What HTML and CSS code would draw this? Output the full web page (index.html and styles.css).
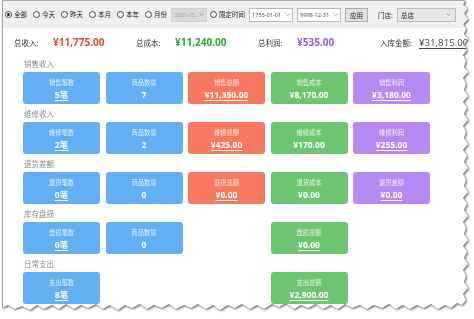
FILE: index.html
```html
<!DOCTYPE HTML>
<html lang="zh-cn">

<head>
    <meta charset="utf-8">
    <title>营业汇总</title>
    <link rel="stylesheet" href="styles.css">
</head>

<body>
    <div class="shot">
        <div class="window">
            <!-- 筛选条件 -->
            <div class="toolbar">
                <label class="radio on"><span class="dot"></span>全部</label>
                <label class="radio"><span class="dot"></span>今天</label>
                <label class="radio"><span class="dot"></span>昨天</label>
                <label class="radio"><span class="dot"></span>本月</label>
                <label class="radio"><span class="dot"></span>本年</label>
                <label class="radio last"><span class="dot"></span>月份</label>
                <div class="combo off">2021-05
                    <svg class="chev" width="5" height="3" viewBox="0 0 5 3"><polyline points="0.5,0.5 2.5,2.5 4.5,0.5" /></svg>
                </div>
                <label class="radio range"><span class="dot"></span>限定时间</label>
                <div class="combo date">1753-01-01
                    <svg class="chev" width="5" height="3" viewBox="0 0 5 3"><polyline points="0.5,0.5 2.5,2.5 4.5,0.5" /></svg>
                </div>
                <div class="combo date">9998-12-31
                    <svg class="chev" width="5" height="3" viewBox="0 0 5 3"><polyline points="0.5,0.5 2.5,2.5 4.5,0.5" /></svg>
                </div>
                <button class="btn">应用</button>
                <span class="store-label">门店:</span>
                <div class="combo store">总店
                    <svg class="chev" width="5" height="3" viewBox="0 0 5 3"><polyline points="0.5,0.5 2.5,2.5 4.5,0.5" /></svg>
                </div>
            </div>

            <!-- 汇总 -->
            <div class="summary">
                <div class="stat"><span class="stat-label">总收入:</span><span class="stat-value red">¥11,775.00</span></div>
                <div class="stat"><span class="stat-label">总成本:</span><span class="stat-value green">¥11,240.00</span></div>
                <div class="stat"><span class="stat-label">总利润:</span><span class="stat-value purple">¥535.00</span></div>
                <div class="stat"><span class="stat-label">入库金额:</span><span class="stat-value plain link">¥31,815.00</span></div>
            </div>

            <div class="sections">
                <div class="sec-title">销售收入</div>
                <div class="cards">
                    <div class="card blue"><div class="c-title">销售笔数</div><div class="c-value"><span class="link">5笔</span></div></div>
                    <div class="card blue"><div class="c-title">商品数量</div><div class="c-value">7</div></div>
                    <div class="card red"><div class="c-title">销售总额</div><div class="c-value"><span class="link">¥11,350.00</span></div></div>
                    <div class="card green"><div class="c-title">销售成本</div><div class="c-value">¥8,170.00</div></div>
                    <div class="card purple"><div class="c-title">销售利润</div><div class="c-value"><span class="link">¥3,180.00</span></div></div>
                </div>

                <div class="sec-title">维修收入</div>
                <div class="cards">
                    <div class="card blue"><div class="c-title">维修笔数</div><div class="c-value"><span class="link">2笔</span></div></div>
                    <div class="card blue"><div class="c-title">商品数量</div><div class="c-value">2</div></div>
                    <div class="card red"><div class="c-title">维修总额</div><div class="c-value"><span class="link">¥425.00</span></div></div>
                    <div class="card green"><div class="c-title">维修成本</div><div class="c-value">¥170.00</div></div>
                    <div class="card purple"><div class="c-title">维修利润</div><div class="c-value"><span class="link">¥255.00</span></div></div>
                </div>

                <div class="sec-title">退货差额</div>
                <div class="cards">
                    <div class="card blue"><div class="c-title">退货笔数</div><div class="c-value"><span class="link">0笔</span></div></div>
                    <div class="card blue"><div class="c-title">商品数量</div><div class="c-value">0</div></div>
                    <div class="card red"><div class="c-title">退货总额</div><div class="c-value"><span class="link">¥0.00</span></div></div>
                    <div class="card green"><div class="c-title">退货成本</div><div class="c-value">¥0.00</div></div>
                    <div class="card purple"><div class="c-title">退货差额</div><div class="c-value"><span class="link">¥0.00</span></div></div>
                </div>

                <div class="sec-title">库存盘损</div>
                <div class="cards">
                    <div class="card blue"><div class="c-title">盘损笔数</div><div class="c-value"><span class="link">0笔</span></div></div>
                    <div class="card blue"><div class="c-title">商品数量</div><div class="c-value">0</div></div>
                    <div class="card green at4"><div class="c-title">盘损总额</div><div class="c-value"><span class="link">¥0.00</span></div></div>
                </div>

                <div class="sec-title">日常支出</div>
                <div class="cards">
                    <div class="card blue"><div class="c-title">支出笔数</div><div class="c-value"><span class="link">8笔</span></div></div>
                    <div class="card green at4"><div class="c-title">支出总额</div><div class="c-value"><span class="link">¥2,900.00</span></div></div>
                </div>
            </div>
        </div>
    </div>
</body>

</html>
```

FILE: styles.css
```css
* {
    box-sizing: border-box;
}

body {
    margin: 0;
    background-color: #fff;
    font-family: "Noto Sans CJK SC", sans-serif;
    color: #333;
}

/* 截图外框: 撕边 + 阴影 */
.shot {
    width: 474px;
    height: 319px;
    filter: drop-shadow(1px 1px 1px rgba(0, 0, 0, 0.65));
}

.window {
    margin-left: 2px;
    width: 470px;
    height: 314px;
    background-color: #fff;
    border-top: 1px solid #a9a9a9;
    border-left: 1px solid #a0a0a0;
    overflow: hidden;
    clip-path: polygon(0 0, 463px 0, 461px 5px, 465px 9px, 462px 14px, 466px 19px, 461px 24px, 464px 29px, 462px 34px, 466px 39px, 462px 44px, 465px 50px, 461px 55px, 464px 61px, 462px 67px, 466px 72px, 461px 78px, 464px 84px, 462px 90px, 466px 96px, 461px 102px, 465px 108px, 462px 114px, 466px 120px, 461px 126px, 464px 132px, 462px 138px, 466px 144px, 461px 150px, 465px 156px, 462px 162px, 466px 168px, 461px 174px, 464px 180px, 462px 186px, 466px 192px, 461px 198px, 465px 204px, 462px 210px, 466px 216px, 461px 222px, 464px 228px, 462px 234px, 466px 240px, 461px 246px, 465px 252px, 462px 258px, 466px 264px, 461px 270px, 464px 276px, 462px 282px, 466px 288px, 461px 294px, 464px 300px, 460px 305px, 455px 303px, 449px 308px, 443px 305px, 436px 309px, 429px 304px, 422px 308px, 415px 305px, 408px 309px, 401px 305px, 394px 309px, 387px 304px, 380px 308px, 372px 305px, 365px 309px, 358px 305px, 350px 308px, 343px 304px, 336px 309px, 329px 305px, 321px 309px, 314px 304px, 306px 308px, 299px 305px, 292px 309px, 284px 303px, 277px 307px, 270px 304px, 262px 309px, 255px 305px, 248px 309px, 240px 304px, 233px 308px, 226px 305px, 218px 310px, 211px 305px, 204px 309px, 196px 304px, 189px 308px, 182px 305px, 174px 309px, 167px 304px, 160px 308px, 152px 305px, 145px 309px, 138px 304px, 130px 308px, 123px 305px, 116px 310px, 108px 305px, 101px 309px, 94px 304px, 86px 308px, 79px 305px, 72px 309px, 64px 304px, 57px 309px, 50px 305px, 42px 309px, 35px 305px, 28px 310px, 20px 306px, 13px 309px, 6px 305px, 0 308px);
}

/* 工具栏 */
.toolbar {
    height: 27px;
    display: flex;
    align-items: center;
    padding-left: 2px;
    background-color: #f0f0f0;
    font-size: 6.5px;
    color: #222;
    white-space: nowrap;
}

.radio {
    display: flex;
    align-items: center;
    gap: 2px;
    margin-right: 6px;
    line-height: 1;
}

.radio.last {
    margin-right: 4px;
}

.radio.range {
    margin-right: 4px;
}

.dot {
    width: 7px;
    height: 7px;
    border: 1px solid #444;
    border-radius: 50%;
    background-color: #fff;
    display: flex;
    align-items: center;
    justify-content: center;
}

.radio.on .dot::after {
    content: "";
    width: 3px;
    height: 3px;
    border-radius: 50%;
    background-color: #222;
}

.combo {
    height: 14px;
    display: flex;
    align-items: center;
    justify-content: space-between;
    padding: 0 2px;
    border: 1px solid #b8b8b8;
    background-color: #fff;
    font-family: "Open Sans", sans-serif;
    font-size: 5.6px;
    color: #444;
}

.chev polyline {
    fill: none;
    stroke: #8a8a8a;
    stroke-width: 0.8;
}

.combo.off {
    width: 36px;
    margin-right: 3px;
    background-color: #d9d9d9;
    border-color: #cfcfcf;
    color: #a0a0a0;
}

.combo.date {
    width: 44px;
    margin-right: 4px;
}

.combo.store {
    width: 59px;
    padding-left: 3px;
    padding-right: 4px;
    background-color: #e6e6e6;
    border-color: #bdbdbd;
    font-family: "Noto Sans CJK SC", sans-serif;
    font-size: 6.5px;
    color: #222;
}

.btn {
    width: 23px;
    height: 14px;
    padding: 0;
    margin-right: 10px;
    border: 1px solid #adadad;
    background-color: #e1e1e1;
    font-family: "Noto Sans CJK SC", sans-serif;
    font-size: 6.5px;
    color: #222;
}

.store-label {
    width: 19px;
}

/* 汇总 */
.summary {
    height: 28px;
    display: grid;
    grid-template-columns: repeat(4, 122px);
    align-items: center;
    padding-left: 11px;
}

.stat {
    display: flex;
    align-items: baseline;
    white-space: nowrap;
}

.stat-label {
    width: 39px;
    font-size: 7.5px;
    color: #333;
}

.stat-value {
    font-family: "Open Sans", sans-serif;
    font-weight: 700;
    font-size: 10px;
}

.stat-value.red {
    color: #ee4538;
}

.stat-value.green {
    color: #1fae2a;
}

.stat-value.purple {
    color: #9a5ae8;
}

.stat-value.plain {
    font-weight: 400;
    font-size: 9.7px;
    color: #444;
}

.link {
    text-decoration: underline;
    text-underline-offset: 1.5px;
    text-decoration-thickness: 0.7px;
}

/* 分组卡片 */
.sections {
    padding-left: 20px;
}

.sec-title {
    height: 16px;
    line-height: 16px;
    padding-left: 1px;
    font-size: 7.5px;
    color: #8a8a8a;
}

.cards {
    display: grid;
    grid-template-columns: repeat(5, 77px);
    column-gap: 5.5px;
    margin-bottom: 2px;
}

.card {
    height: 32px;
    padding-top: 5px;
    border-radius: 3px;
    color: #fff;
    text-align: center;
}

.card.at4 {
    grid-column: 4;
}

.card.blue {
    background-color: #62aff6;
}

.card.red {
    background-color: #f77a5e;
}

.card.green {
    background-color: #6cc56f;
}

.card.purple {
    background-color: #b68af4;
}

.c-title {
    font-size: 6.3px;
    line-height: 12px;
    color: rgba(255, 255, 255, 0.85);
}

.c-value {
    font-family: "Open Sans", "Noto Sans CJK SC", sans-serif;
    font-weight: 700;
    font-size: 8.5px;
    line-height: 12px;
}
```
